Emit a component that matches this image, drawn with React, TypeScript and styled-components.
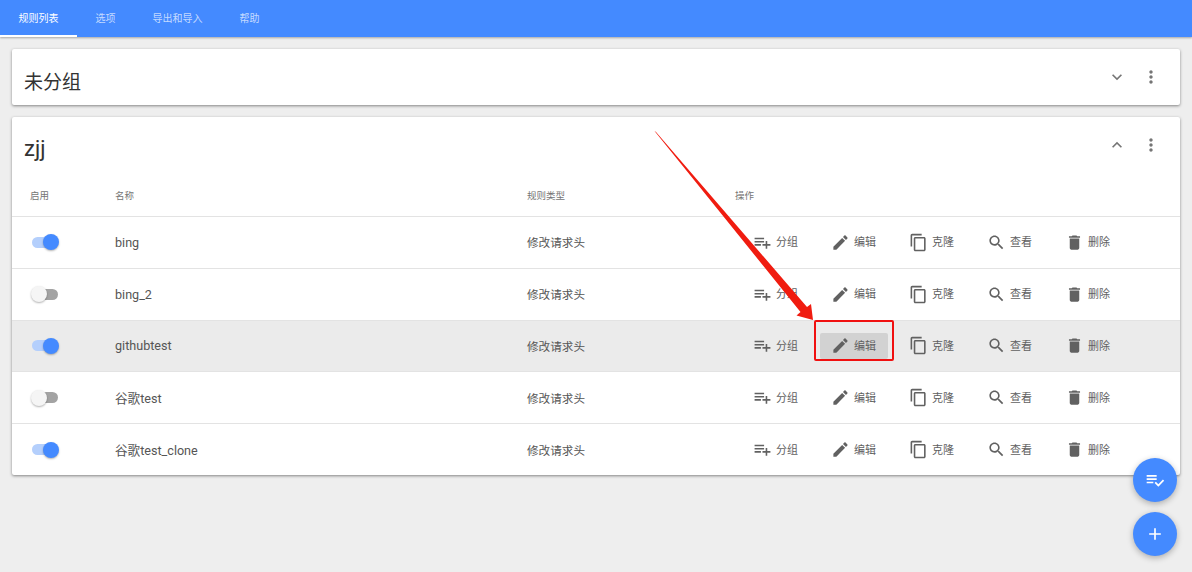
import React from "react";
import styled, { createGlobalStyle } from "styled-components";

const FONT = `Roboto, "Noto Sans CJK SC", sans-serif`;
const BLUE = "#448aff";

const ICONS = {
  playlistAdd:
    "M14 10H2v2h12v-2zm0-4H2v2h12V6zm4 8v-4h-2v4h-4v2h4v4h2v-4h4v-2h-4zM2 16h8v-2H2v2z",
  edit: "M3 17.25V21h3.75L17.81 9.94l-3.75-3.75L3 17.25zM20.71 7.04c.39-.39.39-1.02 0-1.41l-2.34-2.34c-.39-.39-1.02-.39-1.41 0l-1.83 1.83 3.75 3.75 1.83-1.83z",
  copy: "M16 1H4c-1.1 0-2 .9-2 2v14h2V3h12V1zm3 4H8c-1.1 0-2 .9-2 2v14c0 1.1.9 2 2 2h11c1.1 0 2-.9 2-2V7c0-1.1-.9-2-2-2zm0 16H8V7h11v14z",
  search:
    "M15.5 14h-.79l-.28-.27C15.41 12.59 16 11.11 16 9.5 16 5.91 13.09 3 9.5 3S3 5.91 3 9.5 5.91 16 9.5 16c1.61 0 3.09-.59 4.23-1.57l.27.28v.79l5 4.99L20.49 19l-4.99-5zm-6 0C7.01 14 5 11.99 5 9.5S7.01 5 9.5 5 14 7.01 14 9.5 11.99 14 9.5 14z",
  trash:
    "M6 19c0 1.1.9 2 2 2h8c1.1 0 2-.9 2-2V7H6v12zM19 4h-3.5l-1-1h-5l-1 1H5v2h14V4z",
  expandMore: "M16.59 8.59L12 13.17 7.41 8.59 6 10l6 6 6-6z",
  expandLess: "M12 8l-6 6 1.41 1.41L12 10.83l4.59 4.58L18 14z",
  moreVert:
    "M12 8c1.1 0 2-.9 2-2s-.9-2-2-2-2 .9-2 2 .9 2 2 2zm0 2c-1.1 0-2 .9-2 2s.9 2 2 2 2-.9 2-2-.9-2-2-2zm0 6c-1.1 0-2 .9-2 2s.9 2 2 2 2-.9 2-2-.9-2-2-2z",
  playlistCheck:
    "M14 10H2v2h12v-2zm0-4H2v2h12V6zM2 16h8v-2H2v2zm19.5-4.5L23 13l-6.99 7-4.51-4.5L13 14l3.01 3 5.49-5.5z",
  add: "M19 13h-6v6h-2v-6H5v-2h6V5h2v6h6v2z",
};

const TABS = ["规则列表", "选项", "导出和导入", "帮助"];

const ACTIONS: { icon: keyof typeof ICONS; label: string }[] = [
  { icon: "playlistAdd", label: "分组" },
  { icon: "edit", label: "编辑" },
  { icon: "copy", label: "克隆" },
  { icon: "search", label: "查看" },
  { icon: "trash", label: "删除" },
];

const RULES = [
  { name: "bing", enabled: true },
  { name: "bing_2", enabled: false },
  { name: "githubtest", enabled: true, hover: true },
  { name: "谷歌test", enabled: false },
  { name: "谷歌test_clone", enabled: true },
];

const GlobalStyle = createGlobalStyle`
  html, body {
    margin: 0;
    padding: 0;
    background: #eeeeee;
    font-family: ${FONT};
  }
`;

const Page = styled.div`
  position: relative;
  width: 1192px;
  height: 572px;
  overflow: hidden;
  background: #eeeeee;
`;

const TopBar = styled.nav`
  display: flex;
  height: 37px;
  background: ${BLUE};
  box-shadow: 0 1px 2px rgba(0, 0, 0, 0.3);
`;

const Tab = styled.div<{ $active?: boolean }>`
  display: flex;
  align-items: center;
  justify-content: center;
  box-sizing: border-box;
  height: 37px;
  padding: 0 18.5px;
  font-size: 10px;
  color: ${(p) => (p.$active ? "#ffffff" : "rgba(255, 255, 255, 0.7)")};
  border-bottom: 2px solid ${(p) => (p.$active ? "#ffffff" : "transparent")};
`;

const Content = styled.main`
  display: flex;
  flex-direction: column;
  gap: 12px;
  padding: 12px 12px 0;
`;

const Card = styled.section`
  background: #ffffff;
  border-radius: 2px;
  box-shadow: 0 1px 3px rgba(0, 0, 0, 0.45);
`;

const CardHeader = styled.header`
  display: flex;
  align-items: center;
  height: 56px;
  padding: 0 19px 0 12px;
`;

const CardTitle = styled.h2<{ $size: number }>`
  flex: 1;
  margin: 7px 0 0;
  font-size: ${(p) => p.$size}px;
  font-weight: 400;
  color: #333333;
`;

const HeaderIcons = styled.div`
  display: flex;
  gap: 14px;
  color: #757575;
`;

const Row = styled.div<{ $hover?: boolean }>`
  display: grid;
  grid-template-columns: 103px 412px 208px 1fr;
  align-items: center;
  height: 51.8px;
  border-top: 1px solid #e3e3e3;
  box-sizing: border-box;
  background: ${(p) => (p.$hover ? "#ebebeb" : "transparent")};
  font-size: 11.6px;
  color: #555555;
`;

const HeadRow = styled.div`
  display: grid;
  grid-template-columns: 103px 412px 208px 1fr;
  align-items: center;
  height: 43px;
  box-sizing: border-box;
  font-size: 9.5px;
  color: #757575;
`;

const HeadFirst = styled.div`
  padding-left: 18px;
`;

const SwitchCell = styled.div`
  padding-left: 20px;
`;

const Track = styled.div<{ $on: boolean }>`
  position: relative;
  width: 26px;
  height: 11px;
  border-radius: 6px;
  background: ${(p) => (p.$on ? "#b4cffc" : "#a3a3a3")};
`;

const Thumb = styled.div<{ $on: boolean }>`
  position: absolute;
  top: -2.5px;
  left: ${(p) => (p.$on ? "11px" : "-1px")};
  width: 16px;
  height: 16px;
  border-radius: 50%;
  background: ${(p) => (p.$on ? BLUE : "#f5f5f5")};
  box-shadow: 0 1px 2px rgba(0, 0, 0, 0.3);
`;

const NameCell = styled.div`
  font-size: 12.6px;
`;

const Actions = styled.div`
  display: flex;
  gap: 10px;
  padding-left: 7px;
`;

const ActionButton = styled.div<{ $hover?: boolean }>`
  display: flex;
  align-items: center;
  gap: 4px;
  box-sizing: border-box;
  width: 68px;
  height: 26px;
  padding-left: 11px;
  border-radius: 2px;
  background: ${(p) => (p.$hover ? "#d2d2d2" : "transparent")};
  color: #616161;
  white-space: nowrap;
`;

const ActionLabel = styled.span`
  padding-bottom: 2px;
  font-size: 11px;
`;

const Fab = styled.div<{ $bottom: number }>`
  position: absolute;
  right: 15px;
  bottom: ${(p) => p.$bottom}px;
  display: flex;
  align-items: center;
  justify-content: center;
  width: 44px;
  height: 44px;
  border-radius: 50%;
  background: ${BLUE};
  color: #ffffff;
  box-shadow: 0 2px 6px rgba(0, 0, 0, 0.28);
`;

const ArrowLayer = styled.svg`
  position: absolute;
  top: 0;
  left: 0;
  pointer-events: none;
`;

const HighlightBox = styled.div`
  position: absolute;
  left: 814px;
  top: 320px;
  width: 80px;
  height: 41px;
  box-sizing: border-box;
  border: 2px solid #f01010;
  border-radius: 2px;
`;

function Icon({ name, size = 20 }: { name: keyof typeof ICONS; size?: number }) {
  return (
    <svg width={size} height={size} viewBox="0 0 24 24" fill="currentColor">
      <path d={ICONS[name]} />
    </svg>
  );
}

function GroupCard({
  title,
  titleSize,
  open,
  children,
}: {
  title: string;
  titleSize: number;
  open?: boolean;
  children?: React.ReactNode;
}) {
  return (
    <Card>
      <CardHeader>
        <CardTitle $size={titleSize}>{title}</CardTitle>
        <HeaderIcons>
          <Icon name={open ? "expandLess" : "expandMore"} />
          <Icon name="moreVert" />
        </HeaderIcons>
      </CardHeader>
      {children}
    </Card>
  );
}

export default function App() {
  return (
    <Page>
      <GlobalStyle />
      <TopBar>
        {TABS.map((tab, i) => (
          <Tab key={tab} $active={i === 0}>
            {tab}
          </Tab>
        ))}
      </TopBar>
      <Content>
        <GroupCard title="未分组" titleSize={19} />
        <GroupCard title="zjj" titleSize={22} open>
          <HeadRow>
            <HeadFirst>启用</HeadFirst>
            <div>名称</div>
            <div>规则类型</div>
            <div>操作</div>
          </HeadRow>
          {RULES.map((rule) => (
            <Row key={rule.name} $hover={rule.hover}>
              <SwitchCell>
                <Track $on={rule.enabled}>
                  <Thumb $on={rule.enabled} />
                </Track>
              </SwitchCell>
              <NameCell>{rule.name}</NameCell>
              <div>修改请求头</div>
              <Actions>
                {ACTIONS.map((action) => (
                  <ActionButton
                    key={action.label}
                    $hover={rule.hover && action.icon === "edit"}
                  >
                    <Icon name={action.icon} size={19} />
                    <ActionLabel>{action.label}</ActionLabel>
                  </ActionButton>
                ))}
              </Actions>
            </Row>
          ))}
        </GroupCard>
      </Content>
      <Fab $bottom={70}>
        <Icon name="playlistCheck" />
      </Fab>
      <Fab $bottom={16}>
        <Icon name="add" />
      </Fab>
      <ArrowLayer width="1192" height="572" viewBox="0 0 1192 572">
        <polygon
          points="654.5,131 656,132 807,307 811,304 813,320 796.5,315.5 800.5,312"
          fill="#f01c10"
        />
      </ArrowLayer>
      <HighlightBox />
    </Page>
  );
}
